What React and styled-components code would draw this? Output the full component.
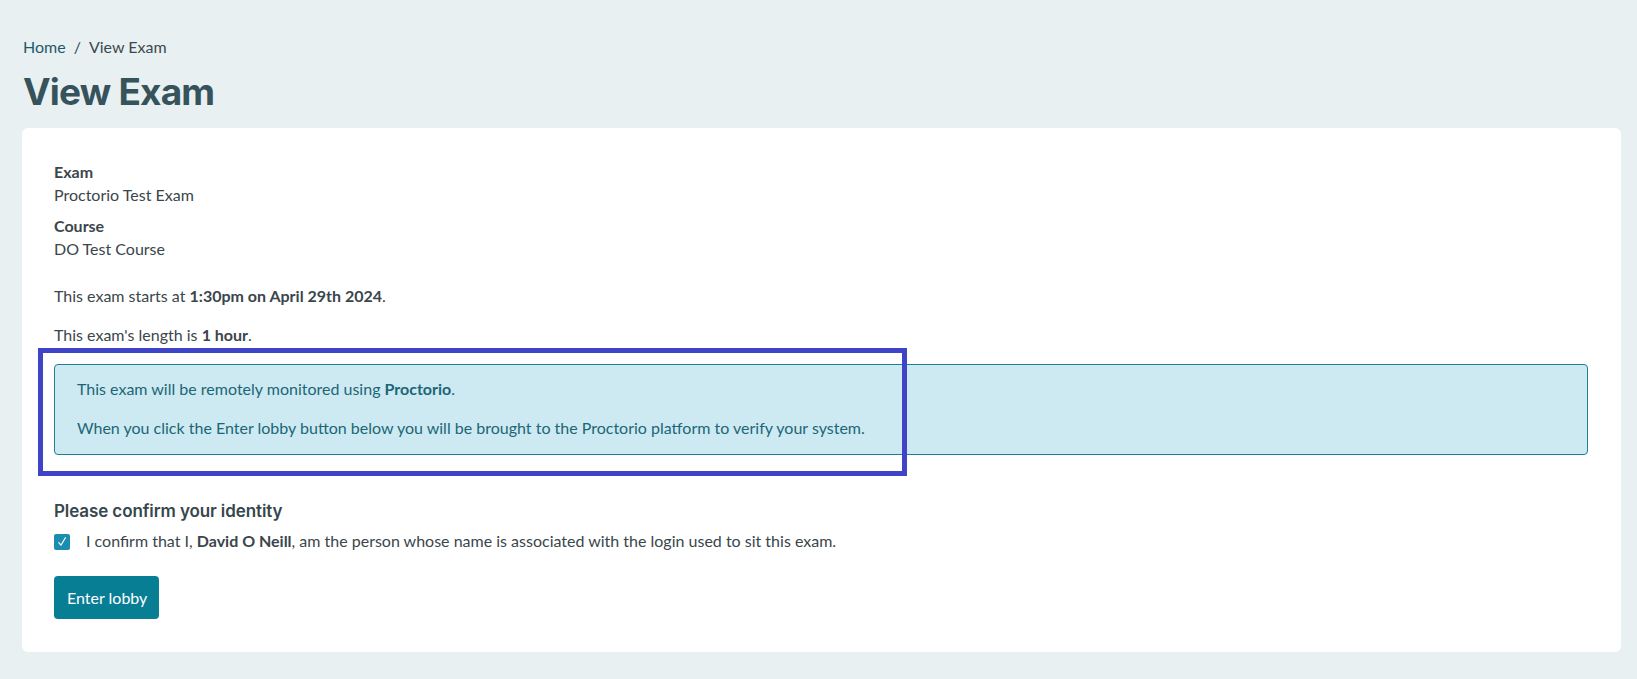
import React from "react";
import styled, { createGlobalStyle } from "styled-components";

const Global = createGlobalStyle`
  html, body { margin: 0; padding: 0; background: #e8f0f2; }
  body { font-family: Lato, "Liberation Sans", sans-serif; color: #3a464b; }
  * { box-sizing: border-box; }
`;

const Page = styled.div`
  position: relative;
  padding: 35px 16px 26px 22px;
  min-height: 679px;
`;

const Crumbs = styled.nav`
  display: flex;
  align-items: center;
  gap: 8px;
  font-size: 16px;
  line-height: 23px;
  padding-left: 1px;
  color: #3b4a50;
`;

const CrumbLink = styled.a`
  color: #1d5a69;
  text-decoration: none;
`;

const Title = styled.h1`
  margin: 12px 0 14px 0;
  font-family: Inter, "Liberation Sans", sans-serif;
  font-weight: 700;
  font-size: 37px;
  line-height: 44px;
  letter-spacing: -0.8px;
  color: #36525a;
  padding-left: 1px;
`;

const Card = styled.section`
  background: #ffffff;
  border-radius: 6px;
  padding: 32px 33px 33px 32px;
  display: flex;
  flex-direction: column;
  align-items: flex-start;
`;

const Field = styled.div`
  font-size: 16px;
  line-height: 23px;
  margin-bottom: ${(p) => p.$mb || 0}px;
`;

const Label = styled.div`
  font-weight: 700;
`;

const Para = styled.p`
  margin: 0 0 ${(p) => p.$mb || 0}px 0;
  font-size: 16px;
  line-height: 23px;
`;

const Alert = styled.div`
  align-self: stretch;
  margin-top: 18px;
  background: #cdeaf2;
  border: 1px solid #1f7f92;
  border-radius: 4px;
  padding: 12px 22px 15px 22px;
  color: #1c6676;
  font-size: 16px;
  line-height: 23px;
`;

const AlertP = styled.p`
  margin: 0 0 ${(p) => p.$mb || 0}px 0;
`;

const Strong = styled.strong`
  font-weight: 700;
`;

const SubTitle = styled.h2`
  margin: 44px 0 6px 0;
  font-family: Inter, "Liberation Sans", sans-serif;
  font-weight: 600;
  font-size: 17px;
  line-height: 24px;
  letter-spacing: -0.1px;
  color: #36474d;
`;

const CheckRow = styled.label`
  display: flex;
  align-items: center;
  gap: 16px;
  font-size: 16px;
  line-height: 23px;
`;

const Box = styled.span`
  width: 16px;
  height: 16px;
  border-radius: 2px;
  background: #1a8db0;
  display: inline-flex;
  align-items: center;
  justify-content: center;
  flex-shrink: 0;
  margin-top: 2px;
`;

const Button = styled.button`
  margin-top: 24px;
  height: 43px;
  padding: 0 12px 0 13px;
  border: none;
  border-radius: 4px;
  background: #087e94;
  color: #ffffff;
  font-family: Lato, "Liberation Sans", sans-serif;
  font-size: 16px;
  cursor: pointer;
`;

const Highlight = styled.div`
  position: absolute;
  left: 38px;
  top: 348px;
  width: 869px;
  height: 128px;
  border: 5px solid #3f43c6;
  pointer-events: none;
`;

export default function App() {
  return (
    <>
      <Global />
      <Page>
        <Crumbs>
          <CrumbLink href="#">Home</CrumbLink>
          <span>/</span>
          <span>View Exam</span>
        </Crumbs>
        <Title>View Exam</Title>
        <Card>
          <Field $mb={8}>
            <Label>Exam</Label>
            <div>Proctorio Test Exam</div>
          </Field>
          <Field $mb={24}>
            <Label>Course</Label>
            <div>DO Test Course</div>
          </Field>
          <Para $mb={16}>
            This exam starts at <Strong>1:30pm on April 29th 2024</Strong>.
          </Para>
          <Para>
            This exam's length is <Strong>1 hour</Strong>.
          </Para>
          <Alert>
            <AlertP $mb={16}>
              This exam will be remotely monitored using <Strong>Proctorio</Strong>.
            </AlertP>
            <AlertP>
              When you click the Enter lobby button below you will be brought to the Proctorio platform to verify your system.
            </AlertP>
          </Alert>
          <SubTitle>Please confirm your identity</SubTitle>
          <CheckRow>
            <Box>
              <svg width="12" height="12" viewBox="0 0 12 12" fill="none">
                <path d="M2.8 6.6 L4.9 9.2 L9.4 1.8" stroke="#ffffff" strokeWidth="1.2" strokeLinecap="round" strokeLinejoin="round" />
              </svg>
            </Box>
            <span>
              I confirm that I, <Strong>David O Neill</Strong>, am the person whose name is associated with the login used to sit this exam.
            </span>
          </CheckRow>
          <Button>Enter lobby</Button>
        </Card>
        <Highlight />
      </Page>
    </>
  );
}
